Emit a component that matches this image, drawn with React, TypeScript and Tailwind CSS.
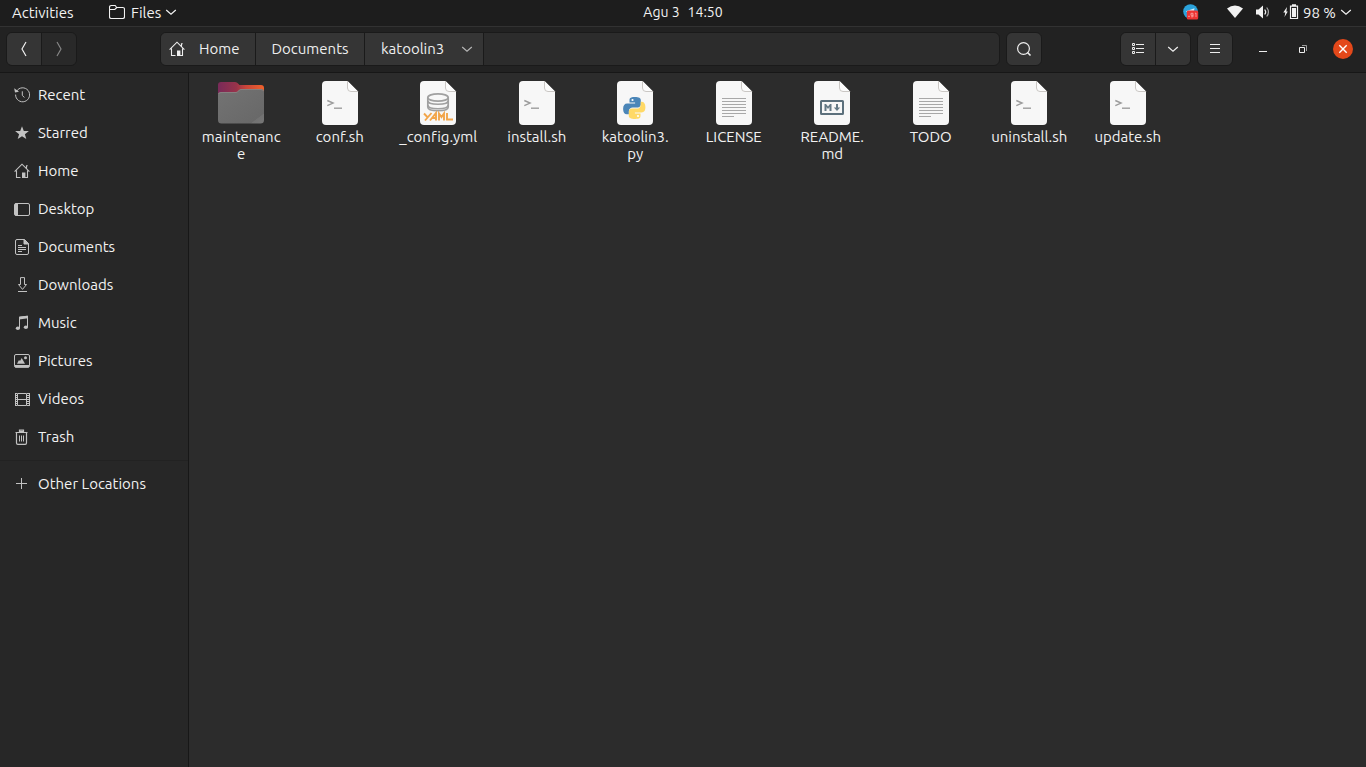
import type { ReactNode } from "react";

type IconProps = { children: ReactNode; className?: string };

function Icon({ children, className = "size-4" }: IconProps) {
  return (
    <svg viewBox="0 0 16 16" fill="none" stroke="currentColor" className={`${className} shrink-0`} aria-hidden="true">
      {children}
    </svg>
  );
}

const ChevronDown = ({ className }: { className?: string }) => (
  <svg viewBox="0 0 12 16" fill="none" stroke="currentColor" strokeWidth="1.2" className={`h-4 w-3 shrink-0 ${className ?? ""}`} aria-hidden="true">
    <path d="M1.2 6 6 10.3 10.8 6" />
  </svg>
);

const HomeIcon = () => (
  <Icon>
    <path d="M.6 8.6 8 1.2l7.4 7.4M2.5 7.5v7h4M13.5 7.5v7H11M12.5 5.5V2.8h1.2" strokeWidth="1.1" />
    <path d="M8 9.5h3.4V15H8z" fill="currentColor" stroke="none" />
  </Icon>
);

const places: { name: string; icon: ReactNode }[] = [
  {
    name: "Recent",
    icon: (
      <Icon>
        <path d="M2.6 4.2a7 7 0 1 1-1 3.4" />
        <path d="M8.3 4.3v4l2 2.2" />
        <path d="M.2 1.2 1 5.5l4-.7z" fill="currentColor" stroke="none" />
      </Icon>
    ),
  },
  {
    name: "Starred",
    icon: (
      <Icon>
        <path d="m8 1.2 1.8 4.7 5.1.2-4 3.1 1.4 4.9L8 11.3l-4.3 2.8 1.4-4.9-4-3.1 5.1-.2z" fill="currentColor" stroke="none" />
      </Icon>
    ),
  },
  { name: "Home", icon: <HomeIcon /> },
  {
    name: "Desktop",
    icon: (
      <Icon>
        <rect x=".5" y="2.5" width="15" height="12" rx="1.5" />
        <path d="M1 2.5h3v12H1z" fill="currentColor" stroke="none" />
      </Icon>
    ),
  },
  {
    name: "Documents",
    icon: (
      <Icon>
        <path d="M3 .5h7.5l4 4V14a1.5 1.5 0 0 1-1.500 1.500H3A1.500 1.500 0 0 1 1.500 14V2A1.500 1.500 0 0 1 3 .5z" />
        <path d="M10 .5V5h4.500z" fill="currentColor" />
        <path d="M4 6.500h4M4 8.500h8M4 10.500h8M4 12.500h4" />
      </Icon>
    ),
  },
  {
    name: "Downloads",
    icon: (
      <Icon>
        <path d="M6.500.6h4v6.900h2L8.500 12.400 4.500 7.500h2zM4 14.500h9" />
      </Icon>
    ),
  },
  {
    name: "Music",
    icon: (
      <Icon>
        <path d="M5.500 13V2.200l8-1V12" />
        <path d="M5 1.800 14 .7v2.600L5 4.400z" fill="currentColor" stroke="none" />
        <ellipse cx="3.9" cy="13.3" rx="2.1" ry="1.8" fill="currentColor" stroke="none" />
        <ellipse cx="11.9" cy="12.3" rx="2.1" ry="1.8" fill="currentColor" stroke="none" />
      </Icon>
    ),
  },
  {
    name: "Pictures",
    icon: (
      <Icon>
        <rect x=".5" y="1.5" width="15" height="12.5" rx="1.5" />
        <path d="M.5 12h15v1.800l-1 .9h-13l-1-.9z" fill="currentColor" stroke="none" />
        <path d="M3 10.800 5 7l1 1 1.700-3L11 10.800z" fill="currentColor" stroke="none" />
        <circle cx="11.5" cy="4.8" r="1.5" fill="currentColor" stroke="none" />
      </Icon>
    ),
  },
  {
    name: "Videos",
    icon: (
      <Icon>
        <path d="M3.500 2.500h9v12h-9zM3.500 8.500h9" />
        <path d="M1.500 2v13M15.500 2v13" />
        <path d="M2.500 2v13M13.500 2v13M14.500 2v13" strokeDasharray="1 1" />
      </Icon>
    ),
  },
  {
    name: "Trash",
    icon: (
      <Icon>
        <path d="M1.500 3.500h12M5.500 3V1.200h4V3M2.500 4v10a1.400 1.400 0 0 0 1.400 1.400h7.200a1.400 1.400 0 0 0 1.400-1.400V4" strokeWidth="1.2" />
        <path d="M5 2h5v2H5z" fill="currentColor" stroke="none" />
        <path d="M5.500 6.500v6M7.500 6.500v6M9.500 6.500v6" />
      </Icon>
    ),
  },
];

type Kind = "folder" | "shell" | "yaml" | "python" | "text" | "markdown";

const files: { lines: string[]; kind: Kind }[] = [
  { lines: ["maintenanc", "e"], kind: "folder" },
  { lines: ["conf.sh"], kind: "shell" },
  { lines: ["_config.yml"], kind: "yaml" },
  { lines: ["install.sh"], kind: "shell" },
  { lines: ["katoolin3.", "py"], kind: "python" },
  { lines: ["LICENSE"], kind: "text" },
  { lines: ["README.", "md"], kind: "markdown" },
  { lines: ["TODO"], kind: "text" },
  { lines: ["uninstall.sh"], kind: "shell" },
  { lines: ["update.sh"], kind: "shell" },
];

function FolderDrawing() {
  return (
    <svg viewBox="0 0 48 48" className="size-12" aria-hidden="true">
      <defs>
        <linearGradient id="folder-back" x1="0" x2="1">
          <stop offset="0" stopColor="#782a59" />
          <stop offset=".4" stopColor="#98334a" />
          <stop offset=".6" stopColor="#c8453a" />
          <stop offset="1" stopColor="#f0622c" />
        </linearGradient>
        <linearGradient id="folder-front" x1="0" y1="0" x2="1" y2="1">
          <stop offset="0" stopColor="#737373" />
          <stop offset=".85" stopColor="#696969" />
          <stop offset=".86" stopColor="#727272" />
          <stop offset="1" stopColor="#777" />
        </linearGradient>
      </defs>
      <path d="M1 20V6q0-3 3-3h14q2 0 3 1.500L22.500 6H44q3 0 3 3v11z" fill="url(#folder-back)" />
      <path d="M1 16q0-3 3-3h15q1.500 0 2.500-1.500T24 10h20q3 0 3 3V41q0 3.500-3.500 3.500h-39Q1 44.500 1 41z" fill="url(#folder-front)" />
      <path d="M1.500 15q.5-1.500 2.500-1.500h15q1.500 0 2.500-1.500T24 10.500h20q2 0 2.500 1.500" fill="none" stroke="#8b8585" strokeWidth=".8" />
    </svg>
  );
}

function FileGlyph({ kind }: { kind: Kind }) {
  switch (kind) {
    case "shell":
      return (
        <g fill="none" stroke="#9c9c9c" strokeWidth="1.4">
          <path d="m11.300 21.500 5.800 2.600-5.800 2.600" />
          <path d="M18 29.200h8" />
        </g>
      );
    case "text":
      return (
        <path d="M12 19.500h24M12 22.500h24M12 25.500h24M12 28.500h24M12 31.500h24M12 34.500h24M12 37.500h12" stroke="#a8a8a8" fill="none" />
      );
    case "yaml":
      return (
        <g fill="none">
          <g stroke="#a0a0a0" strokeWidth="1.7">
            <ellipse cx="24" cy="18.5" rx="10.2" ry="3.7" />
            <path d="M13.800 18.500v3c0 5 20.400 5 20.400 0v-3M13.800 21.500v4.500c0 5 20.400 5 20.400 0v-4.500" />
            <path d="M13.800 26v2c0 5 20.400 5 20.400 0v-2" />
          </g>
          <g stroke="#f2a54a" strokeWidth="1.9">
            <path d="m10 34.500 3.300 3.500M17.500 34l-6.500 7.500M16 41.500l6-7.500v7.500M18 39h4M25 41.500v-7l2.500 3.500 2.500-3.500v7M33 34v6.500h6" />
          </g>
        </g>
      );
    case "markdown":
      return (
        <g>
          <rect x="13" y="22" width="22" height="13" rx=".5" fill="none" stroke="#5c707c" strokeWidth="2" />
          <path d="M16.500 32v-7H18l2 2.500 2-2.500h1.500v7h-2v-4L20 30l-1.500-2v4z" fill="#647985" />
          <path d="M28 25h2v3.500h2.200L29 32l-3.200-3.500H28z" fill="#647985" />
        </g>
      );
    case "python":
      return (
        <g>
          <path d="M23.800 18c-5 0-5.300 1.800-5.300 3.200v2.300h5.600v1h-8c-2.400 0-4 2-4 5.400s1.500 5.300 3.700 5.300h2.100v-3.300c0-2.200 1.800-3.500 3.700-3.500h5.200c1.700 0 3-1.400 3-3.200v-4c0-2-1.700-3.200-6-3.200z" fill="#4b86b8" />
          <path d="M24.200 40c5 0 5.300-1.800 5.300-3.200v-2.300h-5.600v-1h6.500c3 0 4-2 4-5.400s-1.500-5.300-3.700-5.300h-1v2.600c0 2.600-1.700 4.200-3.700 4.200h-5.200c-1.800 0-3 1.500-3 3.200v4c0 2 1.700 3.200 6.400 3.200z" fill="#ffd966" />
          <circle cx="21.5" cy="21" r="1.1" fill="#fff" />
          <circle cx="27" cy="37" r="1.1" fill="#fff" />
        </g>
      );
    default:
      return null;
  }
}

function FileDrawing({ kind }: { kind: Kind }) {
  if (kind === "folder") return <FolderDrawing />;
  return (
    <svg viewBox="0 0 48 48" className="size-12" aria-hidden="true">
      <path d="M10 2.500h21l11 11v28.500q0 4.500-4 4.500H10q-4 0-4-4.500V7q0-4.500 4-4.500z" fill="#202020" opacity=".5" />
      <path d="M10 2h21.500L42 12.500V42q0 4-4 4H10q-4 0-4-4V6q0-4 4-4z" fill="#f7f7f7" />
      <path d="M31.500 2v7q0 3.500 3.500 3.500h7z" fill="#fcfcfc" />
      <path d="M31.500 2v7q0 3.500 3.500 3.500h7" fill="none" stroke="#c4c1bd" strokeWidth=".9" />
      <FileGlyph kind={kind} />
    </svg>
  );
}

function TopBar() {
  return (
    <div className="grid h-[27px] grid-cols-[1fr_auto_1fr] items-center border-b border-[#323232] bg-[#1d1d1d] pb-0.5 text-[#f2f2f2]">
      <div className="flex items-center pl-3">
        <button type="button" className="w-[97px] text-left">Activities</button>
        <button type="button" className="flex items-center gap-1.5">
          <Icon>
            <path d="M2.200 1.500h4l1.500 2h6.100a1.700 1.700 0 0 1 1.700 1.700v7.600a1.700 1.700 0 0 1-1.700 1.700H2.200A1.700 1.700 0 0 1 .5 12.800V3.200a1.700 1.700 0 0 1 1.700-1.700zM.5 5.500h5.300l2-2" strokeWidth="1.1" />
          </Icon>
          <span className="flex items-center gap-1">Files <ChevronDown /></span>
        </button>
      </div>
      <button type="button" className="flex gap-2 text-sm leading-[17px]">
        <span>Agu 3</span>
        <span>14:50</span>
      </button>
      <div className="flex items-center justify-end pr-3.5">
        <button type="button" aria-label="Messages" className="mr-7">
          <svg viewBox="0 0 16 16" className="size-4" aria-hidden="true">
            <circle cx="7.5" cy="7.5" r="7.3" fill="#2ba3dc" />
            <path d="m3 7.200 8.500-3-1 5H5z" fill="#d9eef8" />
            <rect x="3.8" y="6.5" width="11.4" height="9" rx="1.5" fill="#ee3433" />
            <path d="M5 12.300h2M8 9.300h2v2H8zM10 11v1.800H8M12 9.500l1-.5v4" stroke="#fbaaaa" strokeWidth=".8" fill="none" />
          </svg>
        </button>
        <button type="button" aria-label="System menu" className="flex items-center">
          <Icon className="mr-3 size-4">
            <path d="M0 4.500Q8-1.500 16 4.500L8 14z" fill="currentColor" stroke="none" />
          </Icon>
          <Icon className="mr-3 size-4">
            <path d="M1 5.500h2.500L8 1.500v13l-4.500-4H1z" fill="currentColor" stroke="none" />
            <path d="M9.700 5.500q2 2.500 0 5" strokeWidth="1.2" />
            <path d="M11.700 3.500q3.500 4.500 0 9" strokeWidth="1.2" opacity=".65" />
          </Icon>
          <Icon className="mr-1 size-4">
            <path d="M7.500 2.200h7v12.300h-7z" strokeWidth="1.2" />
            <path d="M9 .2h4v2H9zM9 4h4v9H9zM4 3 .3 8.500h2L1.500 13l3.300-5.500H3.300z" fill="currentColor" stroke="none" />
          </Icon>
          <span className="mr-1 whitespace-nowrap">98 %</span>
          <ChevronDown />
        </button>
      </div>
    </div>
  );
}

function HeaderBar() {
  return (
    <header className="flex h-[46px] items-start border-b border-[#171717] bg-[#222] pt-[5px] pr-[3px] pl-1.5 text-[#eee]">
      <div className="mr-[83px] flex h-[34px] w-[71px] shrink-0 divide-x divide-[#1a1a1a] overflow-hidden rounded-md border border-[#1a1a1a]">
        <button type="button" aria-label="Back" className="flex flex-1 items-center justify-center bg-[#353535]">
          <Icon><path d="M10 1 6 8l4 7" strokeWidth="1.2" /></Icon>
        </button>
        <button type="button" aria-label="Forward" disabled className="flex flex-1 items-center justify-center bg-[#292929] text-[#858585]">
          <Icon><path d="m6 1 4 7-4 7" strokeWidth="1.2" /></Icon>
        </button>
      </div>
      <nav aria-label="Path" className="flex h-[34px] min-w-0 flex-1 overflow-hidden rounded-md border border-[#1a1a1a] bg-[#2c2c2c]">
        <button type="button" className="flex w-[95px] items-center gap-3.5 border-r border-[#1a1a1a] bg-[#353535] pl-2">
          <HomeIcon />
          <span className="pb-0.5">Home</span>
        </button>
        <button type="button" className="w-[109px] border-r border-[#1a1a1a] bg-[#353535] pb-0.5">Documents</button>
        <button type="button" className="flex w-[119px] items-center justify-between border-r border-[#1a1a1a] bg-[#353535] pr-2.5 pl-4">
          <span className="pb-0.5">katoolin3</span>
          <ChevronDown className="text-[#b5b5b5]" />
        </button>
      </nav>
      <button type="button" aria-label="Search" className="mr-[78px] ml-1.5 flex h-[34px] w-9 shrink-0 items-center justify-center rounded-md border border-[#1a1a1a] bg-[#353535]">
        <Icon>
          <circle cx="7.5" cy="7.5" r="5.9" strokeWidth="1.2" />
          <path d="m11.500 11.500 3 3" strokeWidth="1.6" />
        </Icon>
      </button>
      <div className="mr-1.5 flex h-[34px] w-[71px] shrink-0 divide-x divide-[#1a1a1a] overflow-hidden rounded-md border border-[#1a1a1a]">
        <button type="button" aria-label="List view" className="flex flex-1 items-center justify-center bg-[#353535]">
          <Icon>
            <path d="M2.500 2.500h2v2h-2zM2.500 6.500h2v2h-2zM2.500 10.500h2v2h-2zM6 3.500h8M6 7.500h8M6 11.500h8" />
          </Icon>
        </button>
        <button type="button" aria-label="View options" className="flex flex-1 items-center justify-center bg-[#353535]">
          <ChevronDown />
        </button>
      </div>
      <button type="button" aria-label="Menu" className="mr-2.5 flex h-[34px] w-9 shrink-0 items-center justify-center rounded-md border border-[#1a1a1a] bg-[#353535]">
        <Icon><path d="M3 3.500h10M3 7.500h10M3 11.500h10" /></Icon>
      </button>
      <button type="button" aria-label="Minimize" className="flex h-[34px] w-10 shrink-0 items-center justify-center">
        <Icon><path d="M4 10.500h8" /></Icon>
      </button>
      <button type="button" aria-label="Restore" className="flex h-[34px] w-10 shrink-0 items-center justify-center">
        <Icon>
          <path d="M4.500 6.500h5v5h-5z" />
          <path d="M7 4.500h4.500V10" opacity=".6" />
        </Icon>
      </button>
      <button type="button" aria-label="Close" className="flex h-[34px] w-10 shrink-0 items-center justify-center">
        <span className="flex size-5 items-center justify-center rounded-full bg-[#e3481a] text-white">
          <Icon><path d="m4.300 4.300 7.400 7.400M11.700 4.300l-7.400 7.400" strokeWidth="1.4" /></Icon>
        </span>
      </button>
    </header>
  );
}

function Place({ name, icon }: { name: string; icon: ReactNode }) {
  return (
    <a href="#" className="flex h-[38px] items-center gap-2 pl-3.5 text-[#f2f2f2]">
      <span className="text-[#c2c2c2]">{icon}</span>
      <span className="pb-0.5">{name}</span>
    </a>
  );
}

export default function App() {
  return (
    <div className="flex min-h-screen flex-col bg-[#2c2c2c] font-['Ubuntu','Noto_Sans',sans-serif] text-[15px] leading-[17px] [font-variant-ligatures:none]">
      <TopBar />
      <HeaderBar />
      <div className="flex flex-1">
        <nav aria-label="Places" className="w-[189px] shrink-0 border-r border-[#171717] bg-[#272727] pt-[3px]">
          {places.map((place) => (
            <Place key={place.name} {...place} />
          ))}
          <hr className="mt-1 mb-1 border-[#222]" />
          <Place name="Other Locations" icon={<Icon><path d="M2 7.500h11M7.500 2v11" /></Icon>} />
        </nav>
        <main className="grid flex-1 grid-cols-[repeat(auto-fill,minmax(82px,1fr))] content-start gap-x-4 pt-1.5 pl-[11px]">
          {files.map(({ lines, kind }) => (
            <button type="button" key={lines.join("")} className="flex flex-col items-center gap-px text-[#f2f2f2]">
              <FileDrawing kind={kind} />
              <span className="flex flex-col whitespace-nowrap">
                {lines.map((line) => (
                  <span key={line}>{line}</span>
                ))}
              </span>
            </button>
          ))}
        </main>
      </div>
    </div>
  );
}
